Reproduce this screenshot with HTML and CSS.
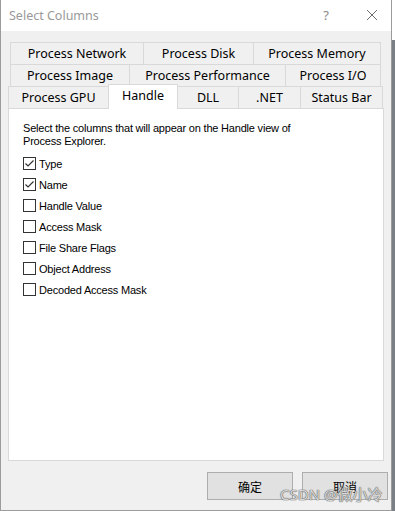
FILE: index.html
```html
<!DOCTYPE html>
<html>
<head>
<meta charset="utf-8">
<link rel="stylesheet" href="styles.css">
</head>
<body>
<div class="window">
  <div class="titlebar">
    <span class="title">Select Columns</span>
    <span class="help">?</span>
    <svg class="close" width="12" height="12" viewBox="0 0 12 12"><path d="M1 1 L11 11 M11 1 L1 11" stroke="#6e6e6e" stroke-width="1" fill="none"/></svg>
  </div>
  <div class="content">
    <div class="tabs">
      <div class="row back">
        <div class="tab" style="width:133px">Process Network</div>
        <div class="tab" style="width:110px">Process Disk</div>
        <div class="tab" style="width:128px">Process Memory</div>
      </div>
      <div class="row back">
        <div class="tab" style="width:119px">Process Image</div>
        <div class="tab" style="width:156px">Process Performance</div>
        <div class="tab" style="width:96px">Process I/O</div>
      </div>
      <div class="row front">
        <div class="tab" style="width:100px">Process GPU</div>
        <div class="tab selected" style="width:70px">Handle</div>
        <div class="tab" style="width:60px">DLL</div>
        <div class="tab" style="width:62px">.NET</div>
        <div class="tab" style="width:83px">Status Bar</div>
      </div>
    </div>
    <div class="panel">
      <p class="desc">Select the columns that will appear on the Handle view of<br>Process Explorer.</p>
      <ul class="checks">
        <li><span class="box checked"><svg width="11" height="11" viewBox="0 0 11 11"><path d="M1.5 5.5 L4 8 L9.5 2.5" stroke="#333" stroke-width="1.2" fill="none"/></svg></span>Type</li>
        <li><span class="box checked"><svg width="11" height="11" viewBox="0 0 11 11"><path d="M1.5 5.5 L4 8 L9.5 2.5" stroke="#333" stroke-width="1.2" fill="none"/></svg></span>Name</li>
        <li><span class="box"></span>Handle Value</li>
        <li><span class="box"></span>Access Mask</li>
        <li><span class="box"></span>File Share Flags</li>
        <li><span class="box"></span>Object Address</li>
        <li><span class="box"></span>Decoded Access Mask</li>
      </ul>
    </div>
    <div class="buttons">
      <button class="btn">确定</button>
      <button class="btn">取消</button>
    </div>
  </div>
  <div class="watermark">CSDN @微小冷</div>
</div>
</body>
</html>
```
FILE: styles.css
```css
html, body {
  margin: 0;
  padding: 0;
  background: #ffffff;
}
body {
  width: 395px;
  height: 511px;
  overflow: hidden;
  background: linear-gradient(#ffffff 0, #ffffff 40px, #7a7f86 40px);
}
.window {
  position: relative;
  width: 392px;
  height: 511px;
  box-sizing: border-box;
  border: 1px solid #9c9c9c;
  border-top: none;
  background: #f0f0f0;
  display: flex;
  flex-direction: column;
  font-family: "Liberation Sans", Arial, sans-serif;
}
.titlebar {
  height: 31px;
  background: #ffffff;
  display: flex;
  align-items: center;
  padding-left: 8px;
  flex: none;
}
.title {
  font-family: "Noto Sans", "Open Sans", sans-serif;
  font-size: 12.5px;
  color: #999999;
  flex: 1;
  margin-top: -1px;
}
.help {
  font-family: "Noto Sans", sans-serif;
  font-size: 13px;
  color: #888888;
  margin-right: 37px;
  margin-top: -1px;
}
.close {
  margin-right: 13px;
  margin-top: -1px;
}
.content {
  padding: 11px 0 0 7px;
  display: flex;
  flex-direction: column;
}
.tabs {
  display: flex;
  flex-direction: column;
}
.row {
  display: flex;
  height: 22px;
}
.row.back {
  margin-left: 2px;
}
.tab {
  box-sizing: border-box;
  height: 22px;
  border: 1px solid #d9d9d9;
  border-right: none;
  border-bottom: none;
  background: #f0f0f0;
  display: flex;
  align-items: center;
  justify-content: center;
  font-family: "Noto Sans", "Open Sans", sans-serif;
  font-size: 12.5px;
  color: #000000;
  flex: none;
  padding-bottom: 1px;
}
.tab:last-child {
  border-right: 1px solid #d9d9d9;
}
.row.front .tab {
  position: relative;
}
.tab.selected {
  background: #ffffff;
  height: 25px;
  margin-top: -2px;
  border-right: 1px solid #d9d9d9;
  z-index: 2;
  padding-bottom: 4px;
}
.tab.selected + .tab {
  border-left: none;
}
.panel {
  box-sizing: border-box;
  width: 376px;
  height: 353px;
  background: #ffffff;
  border: 1px solid #d9d9d9;
  padding: 13px 0 0 14px;
  position: relative;
  z-index: 1;
  margin-top: 0;
}
.desc {
  margin: 0;
  font-size: 11px;
  letter-spacing: -0.2px;
  line-height: 13px;
  color: #000;
}
.checks {
  list-style: none;
  margin: 5px 0 0 0;
  padding: 0;
}
.checks li {
  height: 21px;
  display: flex;
  align-items: center;
  font-size: 11px;
  letter-spacing: -0.2px;
  color: #000;
}
.box {
  box-sizing: border-box;
  width: 13px;
  height: 13px;
  border: 1px solid #333333;
  background: #fff;
  margin-right: 3px;
  display: flex;
  align-items: center;
  justify-content: center;
}
.box svg {
  display: block;
}
.buttons {
  display: flex;
  justify-content: flex-end;
  gap: 9px;
  margin-top: 11px;
  padding-right: 3px;
}
.btn {
  box-sizing: border-box;
  width: 86px;
  height: 28px;
  border: 1px solid #adadad;
  background: #e1e1e1;
  font-family: "Noto Sans CJK SC", sans-serif;
  font-size: 12px;
  color: #000;
  padding: 0;
  margin: 0;
}
.watermark {
  position: absolute;
  left: 279px;
  top: 483px;
  font-family: "Noto Sans", "Noto Sans CJK SC", sans-serif;
  font-size: 15px;
  color: rgba(235, 235, 235, 0.85);
  text-shadow: 0 0 1px #6a6a6a, 0 0 1px #6a6a6a, 0 0 1px #6a6a6a;
  white-space: nowrap;
}
```
